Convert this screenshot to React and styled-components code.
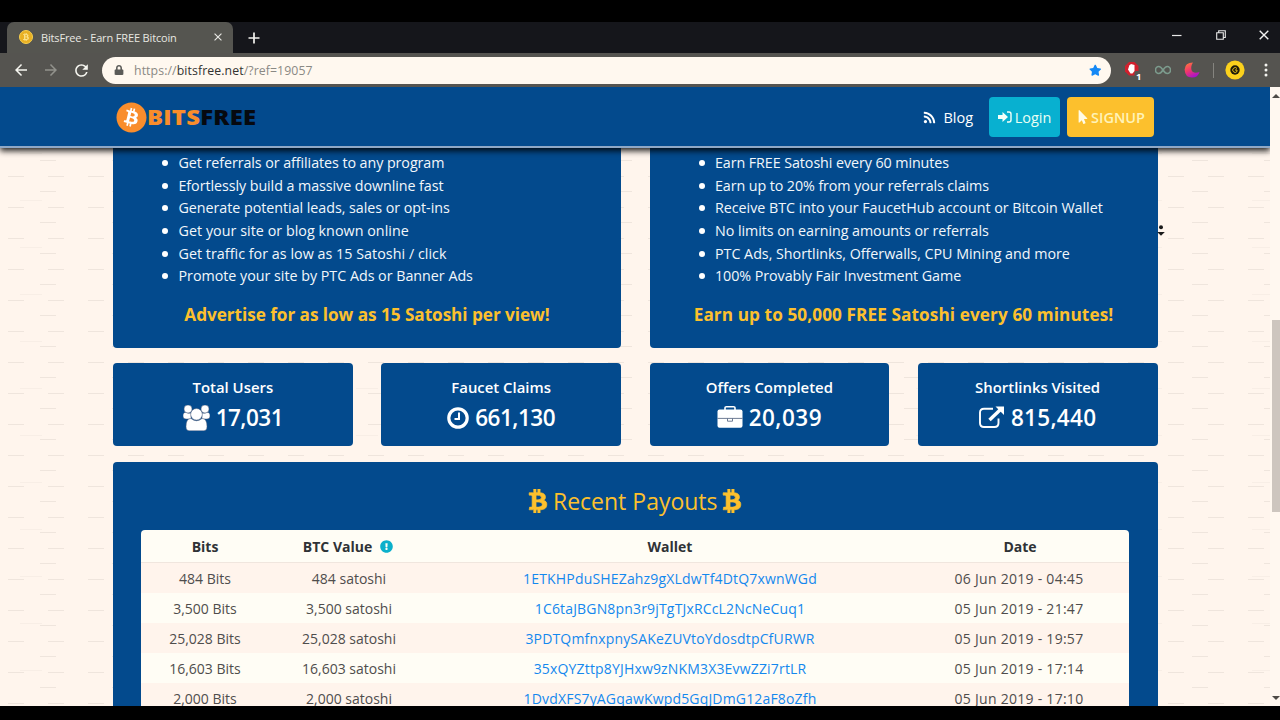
import React from "react";
import styled, { createGlobalStyle, css } from "styled-components";
import {
  FaBitcoin,
  FaBtc,
  FaExclamationCircle,
  FaLock,
  FaMousePointer,
  FaRss,
  FaStar,
} from "react-icons/fa";
import { MdArrowBack, MdArrowForward, MdRefresh } from "react-icons/md";

const advertiserPoints = [
  { text: "Get referrals or affiliates to any program", tracking: -0.07 },
  { text: "Efortlessly build a massive downline fast", tracking: -0.07 },
  { text: "Generate potential leads, sales or opt-ins", tracking: -0.04 },
  { text: "Get your site or blog known online", tracking: 0.04 },
  { text: "Get traffic for as low as 15 Satoshi / click", tracking: 0.03 },
  { text: "Promote your site by PTC Ads or Banner Ads", tracking: -0.02 },
];

const earnerPoints = [
  { text: "Earn FREE Satoshi every 60 minutes", tracking: -0.08 },
  { text: "Earn up to 20% from your referrals claims", tracking: -0.09 },
  { text: "Receive BTC into your FaucetHub account or Bitcoin Wallet", tracking: -0.03 },
  { text: "No limits on earning amounts or referrals", tracking: -0.06 },
  { text: "PTC Ads, Shortlinks, Offerwalls, CPU Mining and more", tracking: -0.02 },
  { text: "100% Provably Fair Investment Game", tracking: -0.06 },
];

const payouts = [
  ["484", "1ETKHPduSHEZahz9gXLdwTf4DtQ7xwnWGd", "06 Jun 2019 - 04:45"],
  ["3,500", "1C6taJBGN8pn3r9jTgTJxRCcL2NcNeCuq1", "05 Jun 2019 - 21:47"],
  ["25,028", "3PDTQmfnxpnySAKeZUVtoYdosdtpCfURWR", "05 Jun 2019 - 19:57"],
  ["16,603", "35xQYZttp8YJHxw9zNKM3X3EvwZZi7rtLR", "05 Jun 2019 - 17:14"],
  ["2,000", "1DvdXFS7yAGqawKwpd5GqJDmG12aF8oZfh", "05 Jun 2019 - 17:10"],
];

const UsersIcon = () => (
  <svg width="27" height="26" viewBox="0 0 27 26" fill="#fff" stroke="#4a5a78" strokeWidth="0.5">
    <path d="M0 11 Q0 7 3 7.5 Q5 8.6 8 8 V14 H3 Q0 14 0 11Z" />
    <path d="M27 11 Q27 7 24 7.5 Q22 8.6 19 8 V14 H24 Q27 14 27 11Z" />
    <circle cx="5" cy="4" r="4" />
    <circle cx="22" cy="4" r="4" />
    <path d="M3 21.5 Q3 13.5 8 13.5 Q13.5 18 19 13.5 Q24 13.5 24 21.5 Q24 25.8 20.5 25.8 H6.5 Q3 25.8 3 21.5Z" />
    <circle cx="13.5" cy="9.3" r="5.8" />
  </svg>
);

const ClockIcon = () => (
  <svg width="22" height="22" viewBox="0 0 22 22" fill="none" stroke="#fff">
    <circle cx="11" cy="11" r="9.2" strokeWidth="3.2" />
    <path d="M12 5.5V12H7.5" strokeWidth="2" />
  </svg>
);

const BriefcaseIcon = () => (
  <svg width="26" height="24" viewBox="0 0 26 24" fill="#fff">
    <path d="M8 4V1.8Q8 0.8 9.4 0.8H16.6Q18 0.8 18 1.8V4" fill="none" stroke="#fff" strokeWidth="1.6" />
    <rect x="0.5" y="3.6" width="25" height="18.2" rx="2" />
    <path d="M0.5 12.4H25.5M10.5 12.6V15.2H15.5V12.6" fill="none" stroke="#4a5a78" strokeWidth="0.8" />
  </svg>
);

const ExternalIcon = () => (
  <svg width="26" height="24" viewBox="0 0 26 24" fill="none" stroke="#fff">
    <path d="M14 2.8H5Q1 2.8 1 6.5V17Q1 21 5 21H15.5Q19.5 21 19.5 17V12.5" strokeWidth="1.9" />
    <path d="M10.5 14L21 4" strokeWidth="3.4" />
    <path d="M16.5 0.5H25V9Z" fill="#fff" stroke="none" />
  </svg>
);

const LoginIcon = () => (
  <svg width="14" height="12" viewBox="0 0 14 12" fill="#f4fff8">
    <path d="M0 4H4.5V1L10 6L4.5 11V8H0Z" />
    <path d="M9 1H11Q13 1 13 3V9Q13 11 11 11H9" fill="none" stroke="#f4fff8" strokeWidth="1.4" />
  </svg>
);

const CloseIcon = ({ size, color }) => (
  <svg width={size} height={size} viewBox="0 0 10 10" stroke={color} strokeWidth="1.4">
    <path d="M0.7 0.7L9.3 9.3M9.3 0.7L0.7 9.3" />
  </svg>
);

const InfoCard = ({ points, slogan, tracking }) => (
  <Card>
    <Points>
      {points.map((point) => (
        <Point key={point.text} $tracking={point.tracking}>
          {point.text}
        </Point>
      ))}
    </Points>
    <Slogan $tracking={tracking}>{slogan}</Slogan>
  </Card>
);

const Stat = ({ label, value, icon, tracking }) => (
  <StatCard>
    <StatLabel>{label}</StatLabel>
    <StatValue $tracking={tracking}>
      {icon}
      <span>{value}</span>
    </StatValue>
  </StatCard>
);

const BrowserChrome = () => (
  <>
    <TabStrip>
      <Tab>
        <Favicon>
          <FaBtc size={8} />
        </Favicon>
        <TabTitle>BitsFree - Earn FREE Bitcoin</TabTitle>
        <CloseIcon size={8} color="#e8e8e4" />
      </Tab>
      <NewTab width="12" height="12" viewBox="0 0 12 12">
        <path d="M6 0.5V11.5M0.5 6H11.5" stroke="#f2f2ee" strokeWidth="1.7" />
      </NewTab>
      <WindowButtons>
        <svg width="10" height="10" viewBox="0 0 10 10">
          <path d="M0 5.5H9.5" stroke="#e8e8e8" strokeWidth="1.2" />
        </svg>
        <svg width="10" height="10" viewBox="0 0 10 10" fill="none" stroke="#e8e8e8">
          <path d="M0.7 2.7H7.3V9.3H0.7ZM2.7 2.5V0.7H9.3V7.5H7.5" strokeWidth="1.1" />
        </svg>
        <CloseIcon size={10} color="#f2f2f2" />
      </WindowButtons>
    </TabStrip>
    <Toolbar>
      <NavButtons>
        <MdArrowBack size={18} color="#f6f6f0" />
        <MdArrowForward size={18} color="#92928c" />
        <MdRefresh size={19} color="#f6f6f0" />
      </NavButtons>
      <AddressBar>
        <FaLock size={10} color="#5b5b58" />
        <Url>
          https://<b>bitsfree.net</b>/?ref=19057
        </Url>
        <FaStar size={12.5} color="#1488f5" />
      </AddressBar>
      <Extensions>
        <svg width="20" height="26" viewBox="0 0 20 26">
          <path d="M6 5H11.5L15.5 9V14.5L11.5 18.5H6L2 14.5V9Z" fill="#d0202d" />
          <path d="M5 12.5L6.3 8.5L8 7L11.5 8V14L9.5 16.5H7.5Z" fill="#fff" />
          <rect x="11.5" y="14" width="8.5" height="10" rx="1.5" fill="#555450" />
          <text x="13" y="23.3" fill="#fff" fontSize="9.5" fontWeight="700" fontFamily="Open Sans, sans-serif">1</text>
        </svg>
        <svg width="16" height="10" viewBox="0 0 16 10" fill="none" stroke="#7c9b8d" strokeWidth="1.6">
          <path d="M8 5C6 2 5 1.5 3.8 1.5A3.3 3.5 0 0 0 3.8 8.5C5 8.5 6 8 8 5C10 2 11 1.5 12.2 1.5A3.3 3.5 0 0 1 12.2 8.5C11 8.5 10 8 8 5Z" />
        </svg>
        <Moon width="16" height="16" viewBox="0 0 16 16">
          <defs>
            <linearGradient id="moon" x1="0.1" y1="0" x2="0.6" y2="1">
              <stop offset="0" stopColor="#ff7a3c" />
              <stop offset="0.5" stopColor="#f0386a" />
              <stop offset="1" stopColor="#a811d0" />
            </linearGradient>
          </defs>
          <path d="M9 0.5Q1 0.5 0.6 7.5Q1 15.5 8 15.5Q14 15.5 15.5 10Q9 12 7.5 8Q6.5 4 9 0.5Z" fill="url(#moon)" />
        </Moon>
        <Divider />
        <svg width="20" height="20" viewBox="0 0 20 20">
          <circle cx="10" cy="10" r="9.6" fill="#fbd11c" />
          <circle cx="10" cy="10" r="4.7" fill="#1d1a0a" />
          <path d="M12 8.5A2.4 2.4 0 1 0 12 11.5V10H10" fill="none" stroke="#fbd11c" strokeWidth="0.9" />
        </svg>
        <MenuDots width="4" height="14" viewBox="0 0 4 14" fill="#f4f4f0">
          <circle cx="2" cy="2" r="1.5" />
          <circle cx="2" cy="7" r="1.5" />
          <circle cx="2" cy="12" r="1.5" />
        </MenuDots>
      </Extensions>
    </Toolbar>
  </>
);

const App = () => {
  return (
    <Screen>
      <GlobalStyle />
      <BrowserChrome />
      <Viewport>
        <Page>
          <Header>
            <Logo>
              <Coin>
                <FaBitcoin size={31} />
              </Coin>
              <LogoText>
                BITS<em>FREE</em>
              </LogoText>
            </Logo>
            <Nav>
              <BlogLink>
                <FaRss size={13} />
                <span>Blog</span>
              </BlogLink>
              <NavButton $login>
                <LoginIcon />
                <span>Login</span>
              </NavButton>
              <NavButton>
                <FaMousePointer size={14} />
                <span>SIGNUP</span>
              </NavButton>
            </Nav>
          </Header>
          <Content>
            <Columns $count={2}>
              <InfoCard
                points={advertiserPoints}
                slogan="Advertise for as low as 15 Satoshi per view!"
                tracking={-0.05}
              />
              <InfoCard
                points={earnerPoints}
                slogan="Earn up to 50,000 FREE Satoshi every 60 minutes!"
                tracking={0.09}
              />
            </Columns>
            <Columns $count={4}>
              <Stat label="Total Users" value="17,031" icon={<UsersIcon />} tracking={-0.5} />
              <Stat label="Faucet Claims" value="661,130" icon={<ClockIcon />} tracking={-0.5} />
              <Stat label="Offers Completed" value="20,039" icon={<BriefcaseIcon />} tracking={0.5} />
              <Stat label="Shortlinks Visited" value="815,440" icon={<ExternalIcon />} tracking={0.3} />
            </Columns>
            <Payouts>
              <PayoutsTitle>
                <FaBtc size={24} />
                <span>Recent Payouts</span>
                <FaBtc size={24} />
              </PayoutsTitle>
              <Table>
                <thead>
                  <tr>
                    <th>Bits</th>
                    <th>
                      <WithIcon>
                        BTC Value <FaExclamationCircle size={13} color="#0bb0cb" />
                      </WithIcon>
                    </th>
                    <th>Wallet</th>
                    <th>Date</th>
                  </tr>
                </thead>
                <tbody>
                  {payouts.map(([amount, wallet, date]) => (
                    <tr key={wallet}>
                      <td>{amount} Bits</td>
                      <td>{amount} satoshi</td>
                      <td>
                        <Wallet>{wallet}</Wallet>
                      </td>
                      <DateCell>{date}</DateCell>
                    </tr>
                  ))}
                </tbody>
              </Table>
            </Payouts>
          </Content>
        </Page>
        <Scrollbar>
          <Arrow />
          <Thumb />
          <Arrow $down />
        </Scrollbar>
      </Viewport>
      <Cursor width="10" height="16" viewBox="0 0 10 16" fill="#1b1b1b">
        <circle cx="5" cy="4.3" r="2" />
        <path d="M5 12.8L8.8 9H1.2Z" />
      </Cursor>
    </Screen>
  );
};

const GlobalStyle = createGlobalStyle`
  * {
    box-sizing: border-box;
    margin: 0;
    padding: 0;
  }
  body {
    background: #000;
    overflow: hidden;
    font-family: "Open Sans", "Noto Sans", sans-serif;
  }
  svg {
    flex: none;
    display: block;
  }
`;

const Screen = styled.div`
  position: relative;
  display: flex;
  flex-direction: column;
  width: 1280px;
  height: 720px;
  padding: 22px 0 14px;
  background: #000;
  overflow: hidden;
`;

const TabStrip = styled.div`
  display: flex;
  align-items: center;
  height: 31px;
  flex: none;
  padding-left: 7px;
  background: #15161b;
`;

const Tab = styled.div`
  display: flex;
  align-items: center;
  width: 226px;
  height: 31px;
  padding: 0 11px 1px 12px;
  border-radius: 7px 7px 0 0;
  background: #555550;
`;

const Favicon = styled.div`
  display: flex;
  align-items: center;
  justify-content: center;
  width: 14px;
  height: 14px;
  border-radius: 50%;
  border: 1.5px solid #f8d04e;
  background: #e9b022;
  color: #fbe28a;
`;

const TabTitle = styled.span`
  flex: 1;
  margin-left: 8px;
  color: #e8e8e2;
  font-size: 11px;
  letter-spacing: -0.15px;
  white-space: nowrap;
`;

const NewTab = styled.svg`
  margin-left: 15px;
`;

const WindowButtons = styled.div`
  display: flex;
  align-items: center;
  gap: 33.5px;
  margin: -5px 11px 0 auto;
`;

const Toolbar = styled.div`
  display: flex;
  align-items: center;
  flex: none;
  height: 34px;
  background: #555450;
`;

const NavButtons = styled.div`
  display: flex;
  align-items: center;
  gap: 12px;
  width: 102px;
  padding-left: 12px;
`;

const AddressBar = styled.div`
  display: flex;
  align-items: center;
  width: 1009px;
  height: 27px;
  padding: 0 10px 0 12px;
  border-radius: 14px;
  background: #fff8ef;
`;

const Url = styled.div`
  flex: 1;
  margin-left: 10px;
  color: #8a8984;
  font-size: 12.3px;
  letter-spacing: 0.09px;
  b {
    color: #33332f;
    font-weight: 400;
  }
`;

const Extensions = styled.div`
  display: flex;
  align-items: center;
  flex: 1;
  gap: 11.5px;
  padding-left: 12px;
`;

const Moon = styled.svg`
  margin-left: 2px;
`;

const Divider = styled.div`
  width: 1px;
  height: 15px;
  margin-left: 1px;
  background: #85847f;
`;

const MenuDots = styled.svg`
  margin-left: 7px;
`;

const Viewport = styled.div`
  display: flex;
  flex: 1;
  min-height: 0;
`;

/* faint staggered dashes, one dash per tile and layer */
const Page = styled.div`
  display: flex;
  flex-direction: column;
  width: 1270px;
  overflow: hidden;
  background-color: #fff5ed;
  background-image: conic-gradient(at 16px 1px, transparent 75%, #efe5dd 0),
    conic-gradient(at 16px 1px, transparent 75%, #efe5dd 0),
    conic-gradient(at 22px 1px, transparent 75%, #f8eee6 0);
  background-size: 40px 31px, 72px 31px, 112px 47px;
  background-position: 8px 27px, 40px 11px, 20px 19px;
`;

const Header = styled.header`
  position: relative;
  z-index: 1;
  display: flex;
  justify-content: space-between;
  align-items: center;
  flex: none;
  height: 61px;
  padding: 1px 116px 0;
  background: #034a8d;
  border-bottom: 2px solid #8fa8c6;
  box-shadow: 0 3px 6px rgba(0, 0, 0, 0.85);
`;

const Logo = styled.div`
  display: flex;
  align-items: center;
  color: #f98d2c;
`;

const Coin = styled.div`
  border-radius: 50%;
  background: radial-gradient(#fff 13px, transparent 14px);
`;

const LogoText = styled.span`
  font-size: 20.5px;
  font-weight: 800;
  letter-spacing: 0.2px;
  color: #f98d2c;
  transform: scaleX(1.165);
  transform-origin: left;
  em {
    color: #06090f;
    font-style: normal;
  }
`;

const Nav = styled.nav`
  display: flex;
  align-items: center;
  gap: 7px;
`;

const BlogLink = styled.a`
  display: flex;
  align-items: center;
  gap: 7px;
  margin-right: 9px;
  color: #fff;
  font-size: 14.5px;
  font-weight: 500;
`;

const NavButton = styled.a`
  display: flex;
  align-items: center;
  justify-content: center;
  gap: ${({ $login }) => ($login ? 3 : 1)}px;
  width: ${({ $login }) => ($login ? 71 : 87)}px;
  height: 40px;
  border-radius: 4px;
  color: ${({ $login }) => ($login ? "#e8fff4" : "#fff3b8")};
  background: ${({ $login }) => ($login ? "#08b0d0" : "#fcc02d")};
  font-size: 14.5px;
  font-weight: ${({ $login }) => ($login ? 400 : 600)};
  svg {
    color: #fffbe6;
  }
`;

const Content = styled.main`
  display: flex;
  flex-direction: column;
  gap: 15px;
  width: 1044.5px;
  margin-left: 113px;
`;

const Columns = styled.div`
  display: grid;
  grid-template-columns: repeat(${({ $count }) => $count}, 1fr);
  gap: 28.5px;
`;

const panel = css`
  background: #034a8d;
  border-radius: 4px;
`;

const Card = styled.section`
  ${panel}
  height: 200px;
  padding-top: 4.3px;
  border-top-left-radius: 0;
  border-top-right-radius: 0;
`;

const Points = styled.ul`
  padding-left: 65.5px;
  color: #f2f7fb;
  font-size: 14.3px;
  line-height: 22.58px;
  list-style: none;
  white-space: nowrap;
`;

const Point = styled.li`
  letter-spacing: ${({ $tracking }) => $tracking}px;
  &::before {
    content: "";
    display: inline-block;
    width: 6px;
    height: 6px;
    margin: 0 10.5px 0 -16.5px;
    border-radius: 50%;
    background: #fff;
    vertical-align: 2px;
  }
`;

const Slogan = styled.p`
  margin-top: 15px;
  color: #fcc02d;
  font-size: 17.2px;
  font-weight: 700;
  letter-spacing: ${({ $tracking }) => $tracking}px;
  line-height: 24px;
  text-align: center;
  white-space: nowrap;
`;

const StatCard = styled.section`
  ${panel}
  display: flex;
  flex-direction: column;
  align-items: center;
  height: 83px;
  padding-top: 12.5px;
  color: #fff;
`;

const StatLabel = styled.h5`
  font-size: 14.9px;
  font-weight: 600;
  line-height: 22px;
`;

const StatValue = styled.div`
  display: flex;
  align-items: center;
  gap: 6px;
  margin-top: 4.5px;
  font-size: 22.5px;
  font-weight: 600;
  letter-spacing: ${({ $tracking }) => $tracking}px;
  line-height: 32px;
`;

const Payouts = styled.section`
  ${panel}
  margin-top: 1px;
  padding: 22px 28px 0;
`;

const PayoutsTitle = styled.h3`
  display: flex;
  align-items: center;
  justify-content: center;
  gap: 2.5px;
  height: 34px;
  margin-bottom: 12px;
  color: #fcc02d;
  font-size: 23px;
  font-weight: 400;
  svg {
    stroke: currentColor;
    stroke-width: 14px;
  }
`;

const Table = styled.table`
  width: 988px;
  table-layout: fixed;
  border-collapse: separate;
  border-spacing: 0;
  border-radius: 4px;
  overflow: hidden;
  background: #fffdf5;
  color: #4f4d4c;
  font-size: 14px;
  text-align: center;
  th {
    height: 33px;
    border-bottom: 1px solid #f0e6de;
    color: #2f3236;
    font-weight: 700;
  }
  th:nth-child(1) {
    width: 128px;
  }
  th:nth-child(2) {
    width: 160px;
  }
  th:nth-child(3) {
    width: 482px;
  }
  td {
    height: 30.1px;
  }
  tbody tr:nth-child(odd) {
    background: #fff4ec;
  }
`;

const WithIcon = styled.span`
  display: inline-flex;
  align-items: center;
  gap: 8px;
  margin-right: 2px;
`;

const Wallet = styled.a`
  color: #1488ee;
  letter-spacing: 0.17px;
`;

const DateCell = styled.td`
  padding-right: 2px;
  letter-spacing: 0.27px;
`;

const Scrollbar = styled.div`
  display: flex;
  flex-direction: column;
  align-items: flex-end;
  width: 10px;
  padding: 7px 0 6px;
  background: #fff8f0;
`;

const Arrow = styled.div`
  border: 4px solid transparent;
  border-top-width: ${({ $down }) => ($down ? 4 : 0)}px;
  border-bottom-width: ${({ $down }) => ($down ? 0 : 4)}px;
  border-top-color: #4d4a46;
  border-bottom-color: #4d4a46;
`;

const Thumb = styled.div`
  width: 8px;
  height: 192px;
  margin: 222px 0 auto;
  background: #cdc6bf;
`;

/* middle-click autoscroll pointer */
const Cursor = styled.svg`
  position: absolute;
  left: 1156px;
  top: 223px;
`;

export default App;
